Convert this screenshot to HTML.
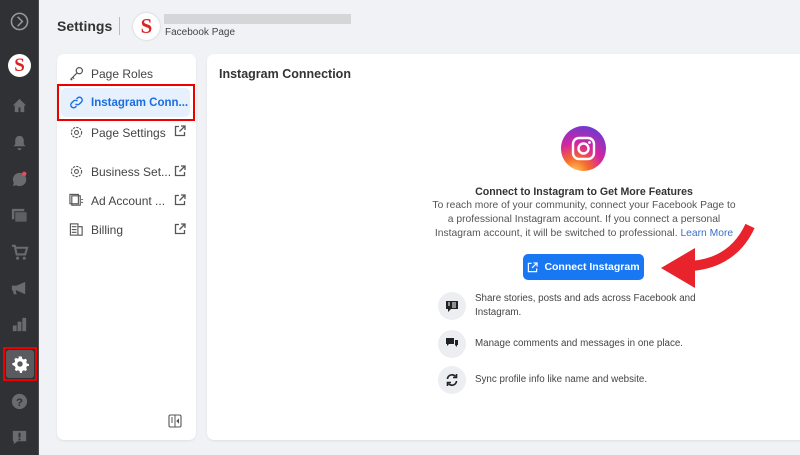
<!DOCTYPE html>
<html><head><meta charset="utf-8"><style>
*{margin:0;padding:0;box-sizing:border-box}
body{width:800px;height:455px;background:#f0f2f5;font-family:"Liberation Sans",sans-serif;position:relative;overflow:hidden;color:#1c1e21}
.sb{position:absolute;left:0;top:0;width:39px;height:455px;background:#303134;border-right:1px solid #4a4b4e}
.ic{position:absolute;left:10px;width:19px;height:19px}
.card{position:absolute;background:#fff;border-radius:7px;box-shadow:0 1px 2px rgba(0,0,0,.08)}
.mi{position:absolute;left:12px;font-size:12px;color:#444;display:flex;align-items:center;white-space:nowrap}
.mi svg{margin-right:7px;flex:none}
.ext{position:absolute;left:117px}
.t{position:absolute;font-size:10.3px;color:#555;text-align:center}
.f{position:absolute;left:438px;display:flex;align-items:center;font-size:9.8px;color:#444;line-height:14px}
.f .c{width:28px;height:28px;border-radius:50%;background:#eceef1;margin-right:9px;display:flex;align-items:center;justify-content:center;flex:none}
</style></head><body>
<div class="sb">
<svg class="ic" style="top:12px" viewBox="0 0 20 20"><circle cx="10" cy="10" r="8.5" fill="none" stroke="#999" stroke-width="1.6"/><path d="M8 5l5 5-5 5" fill="none" stroke="#999" stroke-width="1.6"/></svg>
<div style="position:absolute;left:8px;top:54px;width:23px;height:23px;border-radius:50%;background:#fff;color:#d22;font:bold 19px 'Liberation Serif',serif;text-align:center;line-height:23px">S</div>
<svg class="ic" style="top:96px" viewBox="0 0 20 20"><path d="M10 3l7 7h-2v7h-4v-5H9v5H5v-7H3z" fill="#6a6b6e"/></svg>
<svg class="ic" style="top:133px" viewBox="0 0 20 20"><path d="M10 3c3 0 4.5 2.5 4.5 5v4l2 2H3.5l2-2V8C5.5 5.5 7 3 10 3zM8 16h4a2 2 0 01-4 0z" fill="#6a6b6e"/></svg>
<svg class="ic" style="top:170px" viewBox="0 0 20 20"><path d="M10 3a7 7 0 00-6 10.5L3 17l3.5-1A7 7 0 1010 3z" fill="#6a6b6e"/><circle cx="15" cy="4" r="2.3" fill="#e84a5f"/></svg>
<svg class="ic" style="top:206px" viewBox="0 0 20 20"><rect x="2" y="3" width="13" height="11" fill="#6a6b6e"/><rect x="5" y="6" width="13" height="11" fill="#5e5f62" stroke="#303134"/></svg>
<svg class="ic" style="top:243px" viewBox="0 0 20 20"><path d="M2 3h3l2 9h9l2-7H6" fill="none" stroke="#6a6b6e" stroke-width="2.2"/><circle cx="8" cy="16" r="1.6" fill="#6a6b6e"/><circle cx="15" cy="16" r="1.6" fill="#6a6b6e"/></svg>
<svg class="ic" style="top:279px" viewBox="0 0 20 20"><path d="M2 7h5l9-4v13l-9-4H6l1 4H4l-1-4H2z" fill="#6a6b6e"/></svg>
<svg class="ic" style="top:315px" viewBox="0 0 20 20"><rect x="3" y="11" width="4" height="6" fill="#6a6b6e"/><rect x="8" y="7" width="4" height="10" fill="#6a6b6e"/><rect x="13" y="3" width="4" height="14" fill="#6a6b6e"/></svg>
<div style="position:absolute;left:3px;top:347px;width:34px;height:34px;border:2px solid #e00;"><div style="position:absolute;inset:1px;background:#5a5b5e;border-radius:3px"></div>
<svg style="position:absolute;left:6px;top:6px" width="18" height="18" viewBox="0 0 20 20"><path d="M10 1.5l2 .3.5 2.3 1.6.9 2.2-.8 1.4 1.5-.8 2.2.8 1.6 2.3.5v2l-2.3.5-.8 1.6.8 2.2-1.4 1.5-2.2-.8-1.6.9-.5 2.3h-2l-.5-2.3-1.6-.9-2.2.8-1.4-1.5.8-2.2-.8-1.6L1.5 11V9l2.3-.5.8-1.6-.8-2.2 1.4-1.5 2.2.8 1.6-.9L8 1.8z" fill="#fff"/><circle cx="10" cy="10" r="3" fill="#5a5b5e"/></svg></div>
<svg class="ic" style="top:392px" viewBox="0 0 20 20"><circle cx="10" cy="10" r="8" fill="#6a6b6e"/><text x="10" y="14.5" font-size="12" font-weight="bold" text-anchor="middle" fill="#303134" font-family="Liberation Sans">?</text></svg>
<svg class="ic" style="top:428px" viewBox="0 0 20 20"><path d="M3 3h14v11H8l-4 3v-3H3z" fill="#6a6b6e"/><rect x="9" y="5" width="2" height="5" fill="#303134"/><rect x="9" y="11" width="2" height="2" fill="#303134"/></svg>
</div>

<div style="position:absolute;left:57px;top:18px;font-size:14px;font-weight:bold;color:#333">Settings</div>
<div style="position:absolute;left:119px;top:17px;width:1px;height:18px;background:#bbb"></div>
<div style="position:absolute;left:133px;top:13px;width:27px;height:27px;border-radius:50%;background:#fff;box-shadow:0 0 2px rgba(0,0,0,.2);color:#d22;font:bold 21px 'Liberation Serif',serif;text-align:center;line-height:27px">S</div>
<div style="position:absolute;left:164px;top:14px;width:187px;height:10px;background:#d5d6d8"></div>
<div style="position:absolute;left:165px;top:27px;font-size:10px;color:#444">Facebook Page</div>

<div class="card" style="left:57px;top:54px;width:139px;height:386px">
<div class="mi" style="top:12px"><svg width="15" height="15" viewBox="0 0 16 16"><circle cx="11" cy="5" r="3.3" fill="none" stroke="#555" stroke-width="1.3"/><path d="M8.6 7.4L2 14l1.5 1M4 12l1.5 1.5" fill="none" stroke="#555" stroke-width="1.3"/></svg>Page Roles</div>
<div style="position:absolute;left:4px;top:34px;width:129px;height:29px;background:#e7f0fd;border-radius:5px"></div>
<div class="mi" style="top:41px;color:#1a6ee0;font-weight:bold;font-size:11.5px"><svg width="15" height="15" viewBox="0 0 16 16"><path d="M7 9.5a3 3 0 004.2 0l2.3-2.3a3 3 0 00-4.2-4.2L8 4.3M9 6.5a3 3 0 00-4.2 0L2.5 8.8a3 3 0 004.2 4.2L8 11.7" fill="none" stroke="#1a6ee0" stroke-width="1.5"/></svg>Instagram Conn...</div>
<div class="mi" style="top:71px"><svg width="15" height="15" viewBox="0 0 20 20"><circle cx="10" cy="10" r="6.8" fill="none" stroke="#555" stroke-width="1.5" stroke-dasharray="3 1.5"/><circle cx="10" cy="10" r="2.6" fill="none" stroke="#555" stroke-width="1.4"/></svg>Page Settings</div>
<div class="mi" style="top:110px"><svg width="15" height="15" viewBox="0 0 20 20"><circle cx="10" cy="10" r="6.8" fill="none" stroke="#555" stroke-width="1.5" stroke-dasharray="3 1.5"/><circle cx="10" cy="10" r="2.6" fill="none" stroke="#555" stroke-width="1.4"/></svg>Business Set...</div>
<div class="mi" style="top:139px"><svg width="15" height="15" viewBox="0 0 16 16"><rect x="3" y="3" width="9" height="10" fill="none" stroke="#555" stroke-width="1.2"/><rect x="1" y="1.5" width="9" height="10" fill="none" stroke="#555" stroke-width="1.2"/><path d="M13 7h2M13 10h2" stroke="#555"/></svg>Ad Account ...</div>
<div class="mi" style="top:168px"><svg width="15" height="15" viewBox="0 0 16 16"><rect x="1.5" y="2" width="8" height="12" fill="none" stroke="#555" stroke-width="1.2"/><path d="M3 5h5M3 8h5M3 11h5M10 5h4v9h-4" fill="none" stroke="#555" stroke-width="1.2"/></svg>Billing</div>
<svg class="ext" style="top:71px" width="12" height="12" viewBox="0 0 12 12"><path d="M5 1.5H1.5v9h9V7M7 1h4v4M11 1L5.5 6.5" fill="none" stroke="#555" stroke-width="1.3"/></svg>
<svg class="ext" style="top:111px" width="12" height="12" viewBox="0 0 12 12"><path d="M5 1.5H1.5v9h9V7M7 1h4v4M11 1L5.5 6.5" fill="none" stroke="#555" stroke-width="1.3"/></svg>
<svg class="ext" style="top:140px" width="12" height="12" viewBox="0 0 12 12"><path d="M5 1.5H1.5v9h9V7M7 1h4v4M11 1L5.5 6.5" fill="none" stroke="#555" stroke-width="1.3"/></svg>
<svg class="ext" style="top:169px" width="12" height="12" viewBox="0 0 12 12"><path d="M5 1.5H1.5v9h9V7M7 1h4v4M11 1L5.5 6.5" fill="none" stroke="#555" stroke-width="1.3"/></svg>
<svg style="position:absolute;left:111px;top:360px" width="14" height="14" viewBox="0 0 14 14"><rect x="1" y="1" width="12" height="12" rx="1.5" fill="none" stroke="#555" stroke-width="1.1"/><path d="M7 1v12M3 4h2M3 6h2M3 8h2M10.5 5.5L9 7l1.5 1.5z" stroke="#555" fill="#555"/></svg>
</div>

<div class="card" style="left:207px;top:54px;width:600px;height:386px;border-radius:7px 0 0 7px">
<div style="position:absolute;left:12px;top:13px;font-size:12.5px;font-weight:bold;color:#333">Instagram Connection</div>
</div>

<svg style="position:absolute;left:561px;top:126px" width="45" height="45" viewBox="0 0 45 45"><defs><radialGradient id="g" cx="0.3" cy="1.05" r="1.1"><stop offset="0" stop-color="#fdd55b"/><stop offset="0.3" stop-color="#f56a2c"/><stop offset="0.6" stop-color="#d6249f"/><stop offset="1" stop-color="#6a3bd0"/></radialGradient></defs><circle cx="22.5" cy="22.5" r="22.5" fill="url(#g)"/><rect x="12" y="12" width="21" height="21" rx="6" fill="none" stroke="#fff" stroke-width="2.4"/><circle cx="22.5" cy="22.5" r="5" fill="none" stroke="#fff" stroke-width="2.4"/><circle cx="28.5" cy="16.5" r="1.4" fill="#fff"/></svg>

<div style="position:absolute;left:420px;top:186px;width:328px;text-align:center;font-size:10.6px;font-weight:bold;color:#333">Connect to Instagram to Get More Features</div>
<div class="t" style="left:420px;top:199px;width:328px;line-height:14px">To reach more of your community, connect your Facebook Page to<br>a professional Instagram account. If you connect a personal<br>Instagram account, it will be switched to professional. <span style="color:#3b6fc8">Learn More</span></div>

<div style="position:absolute;left:523px;top:254px;width:121px;height:26px;background:#1877f2;border-radius:5px;color:#fff;font-size:10.5px;font-weight:bold;display:flex;align-items:center;justify-content:center"><svg width="11" height="11" viewBox="0 0 12 12" style="margin-right:6px"><path d="M5 1.5H1.5v9h9V7M7 1h4v4M11 1L5.5 6.5" fill="none" stroke="#fff" stroke-width="1.3"/></svg>Connect Instagram</div>

<svg style="position:absolute;left:655px;top:218px" width="105" height="85" viewBox="0 0 105 85"><path d="M95 8C84 32 64 46 36 48" fill="none" stroke="#e8232b" stroke-width="10"/><path d="M6 50L40 30L40 70z" fill="#e8232b"/></svg>

<div class="f" style="top:292px"><div class="c"><svg width="14" height="14" viewBox="0 0 14 14"><path d="M1 2h12v8H6l-3 3v-3H1z" fill="#222"/><path d="M3 4h2M3 6h2M7 4h4M7 6h4M7 8h4" stroke="#fff"/></svg></div><span>Share stories, posts and ads across Facebook and<br>Instagram.</span></div>
<div class="f" style="top:330px"><div class="c"><svg width="14" height="14" viewBox="0 0 14 14"><path d="M1 1h8v6H4l-2 2V7H1z" fill="#222"/><path d="M5 8h5l2 2V8h1V3h-3v5" fill="#222"/></svg></div><span>Manage comments and messages in one place.</span></div>
<div class="f" style="top:366px"><div class="c"><svg width="14" height="14" viewBox="0 0 14 14"><path d="M2.5 6a4.5 4.5 0 018-2.5M11.5 8a4.5 4.5 0 01-8 2.5" fill="none" stroke="#222" stroke-width="1.6"/><path d="M11.5 1v3.5H8M2.5 13V9.5H6" fill="none" stroke="#222" stroke-width="1.6"/></svg></div><span>Sync profile info like name and website.</span></div>

<div style="position:absolute;left:57px;top:84px;width:138px;height:37px;border:2px solid #e00"></div>
</body></html>
